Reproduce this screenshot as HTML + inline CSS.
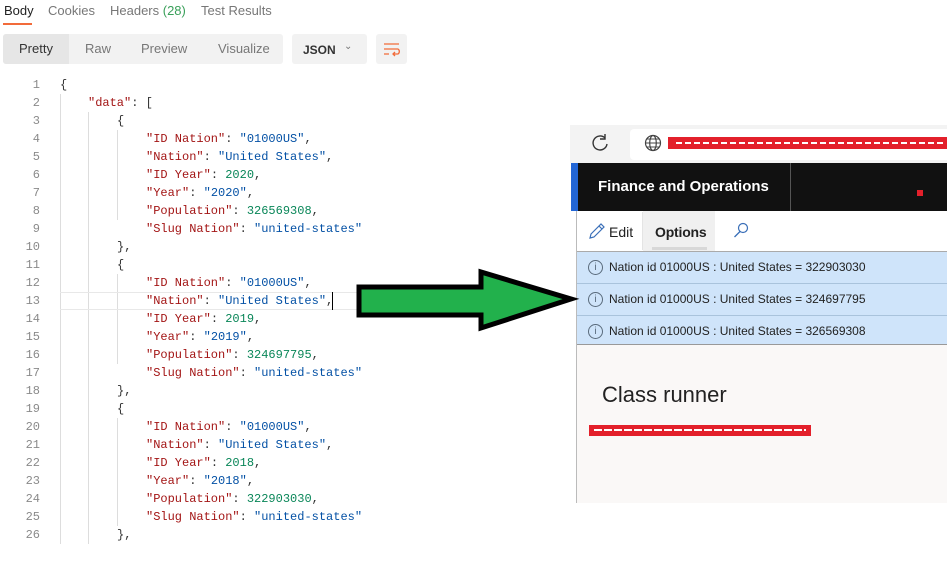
<!DOCTYPE html>
<html><head><meta charset="utf-8"><style>
*{margin:0;padding:0;box-sizing:border-box}
body{width:947px;height:564px;background:#fff;position:relative;overflow:hidden;font-family:"Liberation Sans",sans-serif}
.tab{position:absolute;top:3px;font-size:13px;color:#777}
.code{position:absolute;left:0;top:76px;font-family:"Liberation Mono",monospace;font-size:12px}
.ln{position:absolute;left:0;width:40px;text-align:right;color:#8a8a8a;height:18px;line-height:18px}
.tx{position:absolute;height:18px;line-height:18px;white-space:pre;color:#333}
.k{color:#a31515}.s{color:#0451a5}.n{color:#098658}
.g{position:absolute;width:1px;background:#ddd}
.msg{position:absolute;left:577px;width:370px;height:32px;background:#cfe4fa;border-bottom:1px solid #a9c3dc;font-size:12px;color:#222;line-height:31px;padding-left:32px}
.msg i{position:absolute;left:11px;top:8px;width:15px;height:15px;border:1px solid #5a6b7c;border-radius:50%;font-style:normal;font-size:10px;line-height:13px;text-align:center;color:#5a6b7c}
</style></head><body>
<div class="tab" style="left:4px;color:#222">Body</div>
<div style="position:absolute;left:3px;top:23px;width:29px;height:2px;background:#f26b3a"></div>
<div class="tab" style="left:48px">Cookies</div>
<div class="tab" style="left:110px">Headers <span style="color:#3aa05a">(28)</span></div>
<div class="tab" style="left:201px">Test Results</div>
<div style="position:absolute;left:3px;top:34px;width:280px;height:30px;background:#f2f2f2;border-radius:3px"></div>
<div style="position:absolute;left:3px;top:34px;width:66px;height:30px;background:#e6e6e6;border-radius:3px 0 0 3px"></div>
<div style="position:absolute;left:19px;top:41px;font-size:13px;color:#333">Pretty</div>
<div style="position:absolute;left:85px;top:41px;font-size:13px;color:#777">Raw</div>
<div style="position:absolute;left:141px;top:41px;font-size:13px;color:#777">Preview</div>
<div style="position:absolute;left:218px;top:41px;font-size:13px;color:#777">Visualize</div>
<div style="position:absolute;left:292px;top:34px;width:75px;height:30px;background:#f2f2f2;border-radius:3px"></div>
<div style="position:absolute;left:303px;top:43px;font-size:12px;color:#333;font-weight:bold">JSON</div>
<div style="position:absolute;left:344px;top:41px;font-size:10px;color:#777">&#8964;</div>
<div style="position:absolute;left:376px;top:34px;width:31px;height:30px;background:#f2f2f2;border-radius:3px"></div>
<svg style="position:absolute;left:383px;top:41px" width="17" height="16"><path d="M1 3H16M1 8H15a3 3 0 0 1 0 5H10M12 11l-2 2 2 2M1 13H6" stroke="#f26b3a" stroke-width="1.3" fill="none"/></svg>

<div class="g" style="left:60px;top:94px;height:450px"></div>
<div class="g" style="left:88px;top:112px;height:432px"></div>
<div class="g" style="left:117px;top:130px;height:90px"></div>
<div class="g" style="left:117px;top:274px;height:90px"></div>
<div class="g" style="left:117px;top:418px;height:108px"></div>
<div style="position:absolute;left:60px;top:292px;width:300px;height:18px;border-top:1px solid #e8e8e8;border-bottom:1px solid #e8e8e8"></div>
<div style="position:absolute;left:332px;top:292px;width:1px;height:18px;background:#000"></div>

<div class="code">
<div class="ln" style="top:0">1</div><div class="tx" style="top:0;left:60px">{</div>
<div class="ln" style="top:18px">2</div><div class="tx" style="top:18px;left:88px"><span class="k">"data"</span>: [</div>
<div class="ln" style="top:36px">3</div><div class="tx" style="top:36px;left:117px">{</div>
<div class="ln" style="top:54px">4</div><div class="tx" style="top:54px;left:146px"><span class="k">"ID Nation"</span>: <span class="s">"01000US"</span>,</div>
<div class="ln" style="top:72px">5</div><div class="tx" style="top:72px;left:146px"><span class="k">"Nation"</span>: <span class="s">"United States"</span>,</div>
<div class="ln" style="top:90px">6</div><div class="tx" style="top:90px;left:146px"><span class="k">"ID Year"</span>: <span class="n">2020</span>,</div>
<div class="ln" style="top:108px">7</div><div class="tx" style="top:108px;left:146px"><span class="k">"Year"</span>: <span class="s">"2020"</span>,</div>
<div class="ln" style="top:126px">8</div><div class="tx" style="top:126px;left:146px"><span class="k">"Population"</span>: <span class="n">326569308</span>,</div>
<div class="ln" style="top:144px">9</div><div class="tx" style="top:144px;left:146px"><span class="k">"Slug Nation"</span>: <span class="s">"united-states"</span></div>
<div class="ln" style="top:162px">10</div><div class="tx" style="top:162px;left:117px">},</div>
<div class="ln" style="top:180px">11</div><div class="tx" style="top:180px;left:117px">{</div>
<div class="ln" style="top:198px">12</div><div class="tx" style="top:198px;left:146px"><span class="k">"ID Nation"</span>: <span class="s">"01000US"</span>,</div>
<div class="ln" style="top:216px">13</div><div class="tx" style="top:216px;left:146px"><span class="k">"Nation"</span>: <span class="s">"United States"</span>,</div>
<div class="ln" style="top:234px">14</div><div class="tx" style="top:234px;left:146px"><span class="k">"ID Year"</span>: <span class="n">2019</span>,</div>
<div class="ln" style="top:252px">15</div><div class="tx" style="top:252px;left:146px"><span class="k">"Year"</span>: <span class="s">"2019"</span>,</div>
<div class="ln" style="top:270px">16</div><div class="tx" style="top:270px;left:146px"><span class="k">"Population"</span>: <span class="n">324697795</span>,</div>
<div class="ln" style="top:288px">17</div><div class="tx" style="top:288px;left:146px"><span class="k">"Slug Nation"</span>: <span class="s">"united-states"</span></div>
<div class="ln" style="top:306px">18</div><div class="tx" style="top:306px;left:117px">},</div>
<div class="ln" style="top:324px">19</div><div class="tx" style="top:324px;left:117px">{</div>
<div class="ln" style="top:342px">20</div><div class="tx" style="top:342px;left:146px"><span class="k">"ID Nation"</span>: <span class="s">"01000US"</span>,</div>
<div class="ln" style="top:360px">21</div><div class="tx" style="top:360px;left:146px"><span class="k">"Nation"</span>: <span class="s">"United States"</span>,</div>
<div class="ln" style="top:378px">22</div><div class="tx" style="top:378px;left:146px"><span class="k">"ID Year"</span>: <span class="n">2018</span>,</div>
<div class="ln" style="top:396px">23</div><div class="tx" style="top:396px;left:146px"><span class="k">"Year"</span>: <span class="s">"2018"</span>,</div>
<div class="ln" style="top:414px">24</div><div class="tx" style="top:414px;left:146px"><span class="k">"Population"</span>: <span class="n">322903030</span>,</div>
<div class="ln" style="top:432px">25</div><div class="tx" style="top:432px;left:146px"><span class="k">"Slug Nation"</span>: <span class="s">"united-states"</span></div>
<div class="ln" style="top:450px">26</div><div class="tx" style="top:450px;left:117px">},</div>
</div>

<!-- right panel -->
<div style="position:absolute;left:570px;top:125px;width:377px;height:38px;background:#f3f3f3"></div>
<div style="position:absolute;left:630px;top:129px;width:317px;height:31px;background:#fff;border-radius:4px 0 0 4px"></div>
<svg style="position:absolute;left:590px;top:133px" width="20" height="20"><path d="M15 5A7 7 0 1 0 17 11" stroke="#333" stroke-width="1.4" fill="none"/><path d="M15 1V6H10" stroke="#333" stroke-width="1.4" fill="none"/></svg>
<svg style="position:absolute;left:644px;top:134px" width="18" height="18"><circle cx="9" cy="9" r="7.5" stroke="#444" stroke-width="1.2" fill="none"/><ellipse cx="9" cy="9" rx="3.3" ry="7.5" stroke="#444" stroke-width="1.2" fill="none"/><path d="M1.5 9H16.5M3 5H15M3 13H15" stroke="#444" stroke-width="1"/></svg>
<div style="position:absolute;left:668px;top:137px;width:279px;height:12px;background:#e3202b"></div>
<div style="position:absolute;left:676px;top:142px;width:270px;height:2px;background:repeating-linear-gradient(90deg,#fff 0 6px,transparent 6px 9px)"></div>
<div style="position:absolute;left:577px;top:163px;width:370px;height:48px;background:#111"></div>
<div style="position:absolute;left:571px;top:163px;width:7px;height:48px;background:#2266d6"></div>
<div style="position:absolute;left:598px;top:178px;font-size:15px;font-weight:bold;color:#fff">Finance and Operations</div>
<div style="position:absolute;left:790px;top:163px;width:1px;height:48px;background:#555"></div>
<div style="position:absolute;left:917px;top:190px;width:6px;height:6px;background:#e3202b"></div>
<div style="position:absolute;left:576px;top:211px;width:1px;height:292px;background:#bbb"></div>
<div style="position:absolute;left:577px;top:211px;width:370px;height:41px;background:#fff;border-bottom:1px solid #aaa"></div>
<div style="position:absolute;left:643px;top:211px;width:72px;height:40px;background:#f0f0f0"></div>
<div style="position:absolute;left:652px;top:247px;width:55px;height:3px;background:#d8d8d8"></div>
<svg style="position:absolute;left:588px;top:222px" width="18" height="18"><path d="M2 16L3 12L13 2L16 5L6 15Z M11 4L14 7" stroke="#3a6fb8" stroke-width="1.2" fill="none"/></svg>
<div style="position:absolute;left:609px;top:224px;font-size:14px;color:#222">Edit</div>
<div style="position:absolute;left:642px;top:212px;width:1px;height:38px;background:#e4e4e4"></div>
<div style="position:absolute;left:655px;top:224px;font-size:14px;color:#222;font-weight:bold;letter-spacing:-.2px">Options</div>
<svg style="position:absolute;left:733px;top:222px" width="16" height="17"><circle cx="10" cy="6" r="4.5" stroke="#3a6fb8" stroke-width="1.2" fill="none"/><path d="M7 9.5L1.5 15" stroke="#3a6fb8" stroke-width="1.3"/></svg>
<div class="msg" style="top:252px"><i>i</i>Nation id 01000US : United States = 322903030</div>
<div class="msg" style="top:284px"><i>i</i>Nation id 01000US : United States = 324697795</div>
<div class="msg" style="top:316px;height:29px;border-bottom:1px solid #999"><i>i</i>Nation id 01000US : United States = 326569308</div>
<div style="position:absolute;left:577px;top:345px;width:370px;height:158px;background:#faf8f7"></div>
<div style="position:absolute;left:602px;top:382px;font-size:22px;color:#222">Class runner</div>
<div style="position:absolute;left:589px;top:425px;width:222px;height:11px;background:#e3202b"></div>
<div style="position:absolute;left:594px;top:429px;width:212px;height:2px;background:repeating-linear-gradient(90deg,#fff 0 8px,transparent 8px 10px)"></div>

<svg style="position:absolute;left:0;top:0" width="947" height="564"><polygon points="359,287 481,287 481,272 571,299 481,328 481,315 359,315" fill="#22b14c" stroke="#000" stroke-width="5" stroke-linejoin="miter"/></svg>
</body></html>
